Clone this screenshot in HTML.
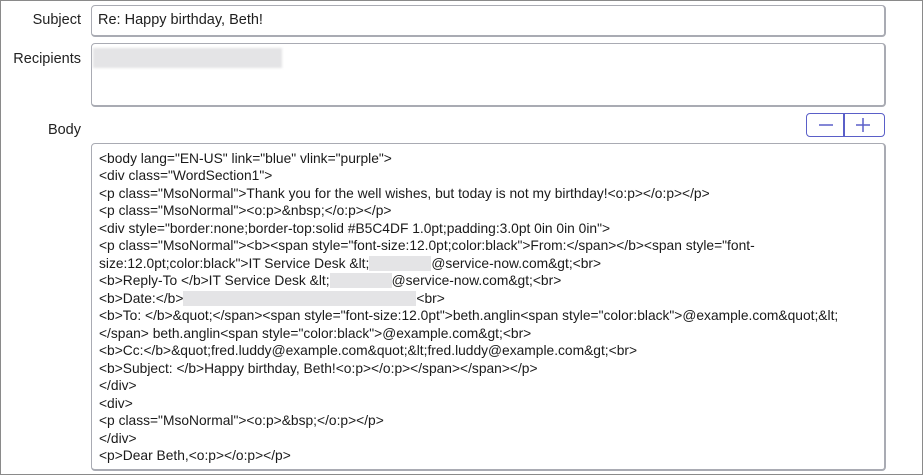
<!DOCTYPE html>
<html><head><meta charset="utf-8"><style>
html,body{margin:0;padding:0;}
body{width:923px;height:475px;position:relative;overflow:hidden;background:#fff;font-family:"Liberation Sans",sans-serif;color:#1e1e1e;}
.frame{position:absolute;left:0;top:0;width:921px;height:473px;border:1px solid #8a8a8a;}
.lbl{position:absolute;right:842px;font-size:14.5px;color:#222;}
.box{position:absolute;left:91px;width:792px;border:1px solid #a9abb3;border-right-width:2px;border-bottom-width:2px;border-radius:4px;background:#fff;}
.blur{position:absolute;background:#e4e4e6;filter:blur(1px);}
.code{position:absolute;left:99px;top:150px;font-size:13.8px;line-height:17.47px;white-space:pre;color:#1a1a1a;}
.g{display:inline-block;background:#e4e4e6;height:15px;vertical-align:-3px;}
.btns{position:absolute;left:806px;top:113px;width:77px;height:22px;border:1.5px solid #5a5fc8;border-radius:4px;}
.btns .d{position:absolute;left:36px;top:0;width:1.5px;height:22px;background:#5a5fc8;}
</style></head><body>
<div class="frame"></div>
<div class="lbl" style="top:12px">Subject</div>
<div class="box" style="top:5px;height:29px"></div>
<div style="position:absolute;left:98px;top:12px;font-size:14.5px;">Re: Happy birthday, Beth!</div>
<div class="lbl" style="top:51px">Recipients</div>
<div class="box" style="top:43px;height:61px"></div>
<div class="blur" style="left:93px;top:48px;width:189px;height:20px;"></div>
<div class="lbl" style="top:122px">Body</div>
<div class="btns"><div class="d"></div>
<svg style="position:absolute;left:0;top:0" width="77" height="22"><line x1="12" y1="11" x2="26" y2="11" stroke="#5a5fc8" stroke-width="1.5"/><line x1="49" y1="11" x2="63" y2="11" stroke="#5a5fc8" stroke-width="1.5"/><line x1="56" y1="4" x2="56" y2="18" stroke="#5a5fc8" stroke-width="1.5"/></svg></div>
<div class="box" style="top:143px;height:325px"></div>
<div class="code">&lt;body lang="EN-US" link="blue" vlink="purple"&gt;
&lt;div class="WordSection1"&gt;
&lt;p class="MsoNormal"&gt;Thank you for the well wishes, but today is not my birthday!&lt;o:p&gt;&lt;/o:p&gt;&lt;/p&gt;
&lt;p class="MsoNormal"&gt;&lt;o:p&gt;&amp;nbsp;&lt;/o:p&gt;&lt;/p&gt;
&lt;div style="border:none;border-top:solid #B5C4DF 1.0pt;padding:3.0pt 0in 0in 0in"&gt;
&lt;p class="MsoNormal"&gt;&lt;b&gt;&lt;span style="font-size:12.0pt;color:black"&gt;From:&lt;/span&gt;&lt;/b&gt;&lt;span style="font-
size:12.0pt;color:black"&gt;IT Service Desk &amp;lt;<span class="g" style="width:62px"></span>@service-now.com&amp;gt;&lt;br&gt;
&lt;b&gt;Reply-To &lt;/b&gt;IT Service Desk &amp;lt;<span class="g" style="width:62px"></span>@service-now.com&amp;gt;&lt;br&gt;
&lt;b&gt;Date:&lt;/b&gt;<span class="g" style="width:233px"></span>&lt;br&gt;
&lt;b&gt;To: &lt;/b&gt;&amp;quot;&lt;/span&gt;&lt;span style="font-size:12.0pt"&gt;beth.anglin&lt;span style="color:black"&gt;@example.com&amp;quot;&amp;lt;
&lt;/span&gt; beth.anglin&lt;span style="color:black"&gt;@example.com&amp;gt;&lt;br&gt;
&lt;b&gt;Cc:&lt;/b&gt;&amp;quot;fred.luddy@example.com&amp;quot;&amp;lt;fred.luddy@example.com&amp;gt;&lt;br&gt;
&lt;b&gt;Subject: &lt;/b&gt;Happy birthday, Beth!&lt;o:p&gt;&lt;/o:p&gt;&lt;/span&gt;&lt;/span&gt;&lt;/p&gt;
&lt;/div&gt;
&lt;div&gt;
&lt;p class="MsoNormal"&gt;&lt;o:p&gt;&amp;bsp;&lt;/o:p&gt;&lt;/p&gt;
&lt;/div&gt;
&lt;p&gt;Dear Beth,&lt;o:p&gt;&lt;/o:p&gt;&lt;/p&gt;</div>
</body></html>
